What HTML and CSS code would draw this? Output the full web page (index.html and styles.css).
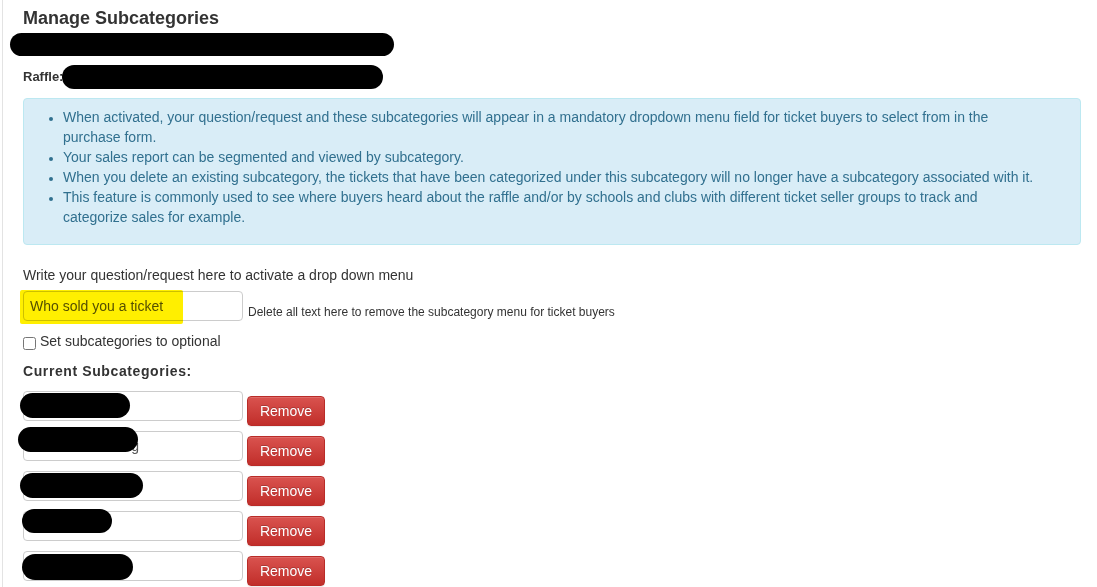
FILE: index.html
```html
<!DOCTYPE html>
<html>
<head>
<meta charset="utf-8">
<link rel="stylesheet" href="styles.css">
</head>
<body>
<div class="page">
  <h4 class="title">Manage Subcategories</h4>
  <div class="redact r-name"></div>
  <div class="raffle"><b>Raffle:</b><span class="redact r-raffle"></span></div>
  <div class="alert">
    <ul>
      <li>When activated, your question/request and these subcategories will appear in a mandatory dropdown menu field for ticket buyers to select from in the purchase form.</li>
      <li>Your sales report can be segmented and viewed by subcategory.</li>
      <li>When you delete an existing subcategory, the tickets that have been categorized under this subcategory will no longer have a subcategory associated with it.</li>
      <li>This feature is commonly used to see where buyers heard about the raffle and/or by schools and clubs with different ticket seller groups to track and categorize sales for example.</li>
    </ul>
  </div>
  <div class="prompt">Write your question/request here to activate a drop down menu</div>
  <div class="qrow">
    <div class="qwrap">
      <input class="field" type="text" value="Who sold you a ticket">
      <span class="highlight"></span>
    </div>
    <span class="hint">Delete all text here to remove the subcategory menu for ticket buyers</span>
  </div>
  <label class="opt"><input type="checkbox" class="cb"><span>Set subcategories to optional</span></label>
  <div class="current">Current Subcategories:</div>
  <div class="subs">
    <div class="sub"><div class="swrap"><input class="field" type="text"><span class="redact" style="left:-3px;top:2px;width:110px;height:25px"></span></div><button class="btn">Remove</button></div>
    <div class="sub"><div class="swrap"><input class="field" type="text" value="                          g"><span class="redact" style="left:-5px;top:-4px;width:120px;height:25px"></span></div><button class="btn">Remove</button></div>
    <div class="sub"><div class="swrap"><input class="field" type="text"><span class="redact" style="left:-3px;top:2px;width:123px;height:25px"></span></div><button class="btn">Remove</button></div>
    <div class="sub"><div class="swrap"><input class="field" type="text"><span class="redact" style="left:-1px;top:-2px;width:90px;height:24px"></span></div><button class="btn">Remove</button></div>
    <div class="sub"><div class="swrap"><input class="field" type="text"><span class="redact" style="left:-1px;top:3px;width:111px;height:26px"></span></div><button class="btn">Remove</button></div>
  </div>
</div>
</body>
</html>
```
FILE: styles.css
```css
html, body {
  margin: 0;
  padding: 0;
  background: #fff;
}
body {
  font-family: "Liberation Sans", Arial, sans-serif;
  font-size: 14px;
  line-height: 20px;
  color: #333;
}
.page {
  margin-left: 2px;
  border-left: 1px solid #e3e3e3;
  padding: 6px 16px 0 20px;
  min-height: 600px;
  box-sizing: border-box;
}
.title {
  margin: 0;
  font-size: 18px;
  line-height: 24px;
  font-weight: bold;
  color: #333;
}
.redact {
  display: block;
  background: #000;
  border-radius: 14px;
}
.r-name {
  width: 384px;
  height: 23px;
  margin: 3px 0 0 -13px;
}
.raffle {
  position: relative;
  margin-top: 9px;
  height: 24px;
  font-size: 13px;
  line-height: 24px;
  color: #333;
}
.r-raffle {
  position: absolute;
  left: 39px;
  top: 0;
  width: 321px;
  height: 24px;
}
.alert {
  margin-top: 9px;
  background: #d9edf7;
  border: 1px solid #bce8f1;
  border-radius: 4px;
  color: #31708f;
  padding: 8px 39px 17px 15px;
}
.alert ul {
  margin: 0;
  padding-left: 24px;
}
.alert li::marker {
  font-size: 12px;
}
.prompt {
  margin-top: 20px;
}
.qrow {
  display: flex;
  align-items: flex-end;
  margin-top: 6px;
}
.qwrap, .swrap {
  position: relative;
  width: 220px;
  height: 30px;
  flex: none;
}
.field {
  box-sizing: border-box;
  width: 220px;
  height: 30px;
  margin: 0;
  padding: 4px 6px;
  border: 1px solid #ccc;
  border-radius: 4px;
  font-family: "Liberation Sans", Arial, sans-serif;
  font-size: 14px;
  color: #555;
  background: #fff;
  white-space: pre;
}
.highlight {
  position: absolute;
  left: -3px;
  top: -1px;
  width: 163px;
  height: 34px;
  background: #ffef00;
  mix-blend-mode: multiply;
  border-radius: 2px;
}
.hint {
  font-size: 12px;
  line-height: 16px;
  margin-left: 5px;
  margin-bottom: 1px;
}
.opt {
  display: flex;
  align-items: flex-end;
  margin-top: 10px;
  height: 20px;
}
.cb {
  box-sizing: border-box;
  width: 13px;
  height: 13px;
  margin: 0 4px 0 0;
  position: relative;
  top: -1px;
}
.current {
  margin-top: 10px;
  font-weight: bold;
  font-size: 14px;
  letter-spacing: 0.6px;
}
.subs {
  display: flex;
  flex-direction: column;
  gap: 5px;
  margin-top: 10px;
}
.sub {
  display: flex;
  align-items: flex-start;
  gap: 4px;
}
.swrap .redact {
  position: absolute;
}
.btn {
  margin-top: 5px;
  box-sizing: border-box;
  width: 78px;
  height: 30px;
  padding: 0;
  border: 1px solid #b92c28;
  border-radius: 4px;
  background: linear-gradient(to bottom, #d9534f 0%, #c12e2a 100%);
  color: #fff;
  font-family: "Liberation Sans", Arial, sans-serif;
  font-size: 14px;
  text-shadow: 0 -1px 0 rgba(0,0,0,0.2);
  box-shadow: inset 0 1px 0 rgba(255,255,255,0.15), 0 1px 1px rgba(0,0,0,0.075);
}
```
